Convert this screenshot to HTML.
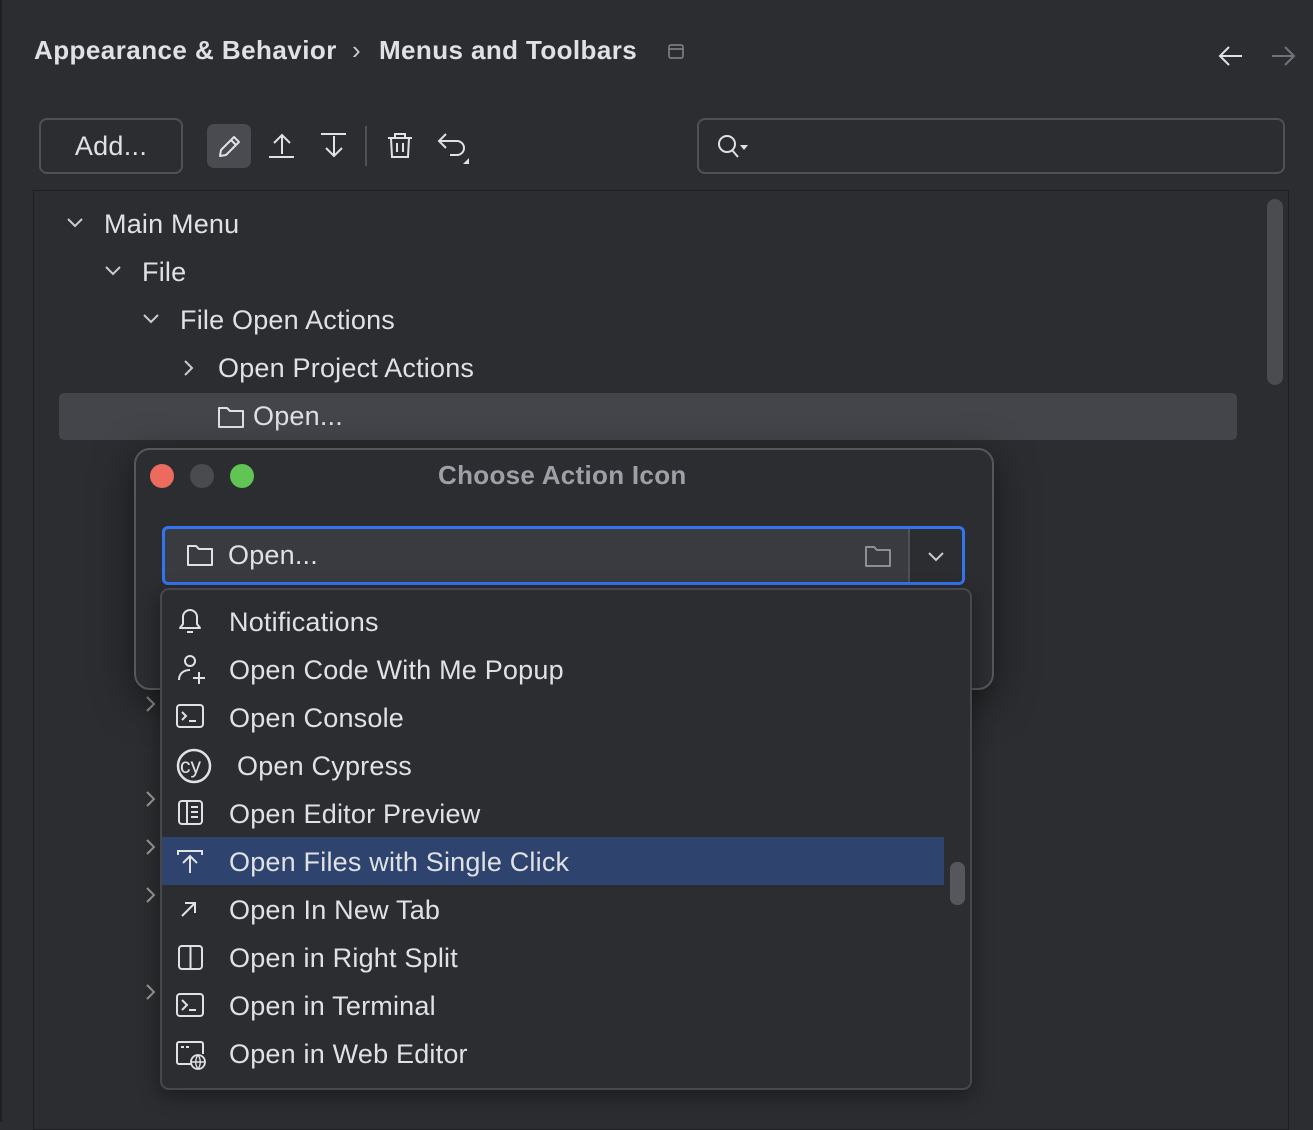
<!DOCTYPE html>
<html><head><meta charset="utf-8"><style>
*{box-sizing:border-box;margin:0;padding:0}
body{width:1313px;height:1122px;background:#2b2d30;font-family:"Liberation Sans",sans-serif;color:#dfe1e5;position:relative;overflow:hidden}
.abs{position:absolute}
.t{font-size:27px;white-space:nowrap;letter-spacing:0.2px}
svg{position:absolute;overflow:visible}
</style></head><body>
<div class="abs" style="left:0;top:0;width:2px;height:1122px;background:#1e1f22"></div>
<div class="abs t" style="left:34px;top:35px;font-weight:bold;font-size:26px;letter-spacing:0.45px">Appearance &amp; Behavior</div>
<div class="abs t" style="left:352px;top:35px;color:#ccc;font-size:26px">›</div>
<div class="abs t" style="left:379px;top:35px;font-weight:bold;font-size:26px;letter-spacing:0.4px">Menus and Toolbars</div>
<svg style="left:668px;top:44px" width="16" height="16"><rect x="1" y="1" width="14" height="13" rx="2" fill="none" stroke="#888" stroke-width="1.5"/><line x1="1" y1="5" x2="15" y2="5" stroke="#888" stroke-width="1.5"/></svg>
<svg style="left:1218px;top:44px" width="26" height="24"><path d="M24 12H2M11 3L2 12l9 9" fill="none" stroke="#dfe1e5" stroke-width="2"/></svg>
<svg style="left:1270px;top:44px" width="26" height="24"><path d="M2 12h22M15 3l9 9-9 9" fill="none" stroke="#6f737a" stroke-width="2"/></svg>

<div class="abs" style="left:39px;top:118px;width:144px;height:56px;border:2px solid #4e5157;border-radius:8px;font-size:27px;letter-spacing:0.3px;text-align:center;line-height:52px">Add...</div>
<div class="abs" style="left:207px;top:124px;width:44px;height:44px;background:#494b50;border-radius:7px"></div>
<svg style="left:215px;top:132px" width="28" height="28"><path d="M5 24l1-6L19 5l5 5L11 23z M16 8l5 5" fill="none" stroke="#dfe1e5" stroke-width="2" stroke-linejoin="round"/></svg>
<svg style="left:268px;top:132px" width="28" height="28"><path d="M14 22V3M6 11l8-8 8 8M1 25h25" fill="none" stroke="#dfe1e5" stroke-width="2"/></svg>
<svg style="left:320px;top:132px" width="28" height="28"><path d="M14 4v20M6 16l8 8 8-8M1 2h25" fill="none" stroke="#dfe1e5" stroke-width="2"/></svg>
<div class="abs" style="left:365px;top:126px;width:2px;height:40px;background:#4e5157"></div>
<svg style="left:386px;top:132px" width="28" height="30"><path d="M2 6h24M9 6V2h10v4M5 6l1 19h16l1-19M11 11v9M17 11v9" fill="none" stroke="#dfe1e5" stroke-width="2"/></svg>
<svg style="left:437px;top:132px" width="34" height="30"><path d="M9 2L2 9l7 7M2 9h18a7 7 0 010 14h-7" fill="none" stroke="#dfe1e5" stroke-width="2"/><path d="M32 26v6h-6z" fill="#dfe1e5"/></svg>

<div class="abs" style="left:697px;top:118px;width:588px;height:56px;border:2px solid #4e5157;border-radius:8px"></div>
<svg style="left:716px;top:133px" width="36" height="28"><circle cx="11" cy="11" r="8" fill="none" stroke="#dfe1e5" stroke-width="2"/><path d="M16 17l6 7" stroke="#dfe1e5" stroke-width="2"/><path d="M24 12h8l-4 5z" fill="#dfe1e5"/></svg>

<div class="abs" style="left:33px;top:190px;width:1256px;height:940px;border:1px solid #1e1f22;background:#2b2d30"></div>
<div class="abs" style="left:1267px;top:199px;width:16px;height:186px;background:#4a4c50;border-radius:8px"></div>

<svg style="left:66px;top:217px" width="18" height="12"><path d="M2 2l7 7 7-7" fill="none" stroke="#ccc" stroke-width="2"/></svg>
<div class="abs t" style="left:104px;top:209px">Main Menu</div>
<svg style="left:104px;top:265px" width="18" height="12"><path d="M2 2l7 7 7-7" fill="none" stroke="#ccc" stroke-width="2"/></svg>
<div class="abs t" style="left:142px;top:257px">File</div>
<svg style="left:142px;top:313px" width="18" height="12"><path d="M2 2l7 7 7-7" fill="none" stroke="#ccc" stroke-width="2"/></svg>
<div class="abs t" style="left:180px;top:305px">File Open Actions</div>
<svg style="left:183px;top:359px" width="12" height="18"><path d="M2 2l7 7-7 7" fill="none" stroke="#ccc" stroke-width="2"/></svg>
<div class="abs t" style="left:218px;top:353px">Open Project Actions</div>
<div class="abs" style="left:59px;top:393px;width:1178px;height:47px;background:#43454a;border-radius:5px"></div>
<svg style="left:217px;top:405px" width="28" height="24"><path d="M2 3h8l3 3h13v16H2z" fill="none" stroke="#dfe1e5" stroke-width="2" stroke-linejoin="round"/></svg>
<div class="abs t" style="left:253px;top:401px">Open...</div>

<svg style="left:145px;top:695px" width="12" height="18"><path d="M2 2l7 7-7 7" fill="none" stroke="#999" stroke-width="2"/></svg>
<svg style="left:145px;top:790px" width="12" height="18"><path d="M2 2l7 7-7 7" fill="none" stroke="#999" stroke-width="2"/></svg>
<svg style="left:145px;top:838px" width="12" height="18"><path d="M2 2l7 7-7 7" fill="none" stroke="#999" stroke-width="2"/></svg>
<svg style="left:145px;top:886px" width="12" height="18"><path d="M2 2l7 7-7 7" fill="none" stroke="#999" stroke-width="2"/></svg>
<svg style="left:145px;top:983px" width="12" height="18"><path d="M2 2l7 7-7 7" fill="none" stroke="#999" stroke-width="2"/></svg>

<div class="abs" style="left:134px;top:448px;width:860px;height:242px;background:#2b2d30;border:2px solid #55575c;border-radius:16px;box-shadow:0 10px 40px rgba(0,0,0,.5)"></div>
<div class="abs" style="left:150px;top:464px;width:24px;height:24px;border-radius:50%;background:#ec6a5e"></div>
<div class="abs" style="left:190px;top:464px;width:24px;height:24px;border-radius:50%;background:#4a4b4e"></div>
<div class="abs" style="left:230px;top:464px;width:24px;height:24px;border-radius:50%;background:#61c554"></div>
<div class="abs t" style="left:438px;top:460px;font-weight:bold;color:#9da0a6;font-size:26px;letter-spacing:0.3px">Choose Action Icon</div>
<div class="abs" style="left:162px;top:526px;width:803px;height:59px;border:3px solid #3574f0;border-radius:6px;background:#393b40;overflow:hidden">
<div class="abs" style="left:743px;top:0;width:60px;height:56px;background:#2b2d30;border-left:2px solid #4e5157"></div>
</div>
<svg style="left:186px;top:543px" width="28" height="24"><path d="M2 3h8l3 3h13v16H2z" fill="none" stroke="#dfe1e5" stroke-width="2" stroke-linejoin="round"/></svg>
<div class="abs t" style="left:228px;top:540px">Open...</div>
<svg style="left:864px;top:544px" width="28" height="24"><path d="M2 3h8l3 3h13v16H2z" fill="none" stroke="#8c8f94" stroke-width="2" stroke-linejoin="round"/></svg>
<svg style="left:927px;top:551px" width="18" height="12"><path d="M2 2l7 7 7-7" fill="none" stroke="#ccc" stroke-width="2"/></svg>

<div class="abs" style="left:160px;top:588px;width:812px;height:502px;background:#2b2d30;border:2px solid #46484d;border-radius:9px;box-shadow:0 6px 20px rgba(0,0,0,.4)"></div>
<div class="abs" style="left:162px;top:837px;width:782px;height:48px;background:#2e436e"></div>
<div class="abs" style="left:950px;top:862px;width:15px;height:43px;background:#55575c;border-radius:7px"></div>

<svg style="left:176px;top:606px" width="28" height="32"><path d="M4 22h20l-3-4V11a7 7 0 00-14 0v7z M11 26h6" fill="none" stroke="#dfe1e5" stroke-width="2" stroke-linejoin="round"/></svg>
<div class="abs t" style="left:229px;top:607px">Notifications</div>
<svg style="left:176px;top:654px" width="32" height="32"><circle cx="14" cy="7" r="5" fill="none" stroke="#dfe1e5" stroke-width="2"/><path d="M3 26c0-6 4-10 11-10 M17 24h12M23 18v12" fill="none" stroke="#dfe1e5" stroke-width="2"/></svg>
<div class="abs t" style="left:229px;top:655px">Open Code With Me Popup</div>
<svg style="left:176px;top:704px" width="30" height="26"><rect x="1" y="1" width="26" height="22" rx="3" fill="none" stroke="#dfe1e5" stroke-width="2"/><path d="M6 8l4 4-4 4M13 17h7" fill="none" stroke="#dfe1e5" stroke-width="2"/></svg>
<div class="abs t" style="left:229px;top:703px">Open Console</div>
<svg style="left:176px;top:748px" width="36" height="36"><circle cx="18" cy="18" r="16" fill="none" stroke="#dfe1e5" stroke-width="2.5"/><text x="4" y="25" font-family="Liberation Sans" font-size="21" fill="#dfe1e5">cy</text></svg>
<div class="abs t" style="left:237px;top:751px">Open Cypress</div>
<svg style="left:178px;top:800px" width="26" height="26"><rect x="1" y="1" width="23" height="23" rx="3" fill="none" stroke="#dfe1e5" stroke-width="2"/><path d="M9 1v23M13 7h7M13 12h7M13 17h7" fill="none" stroke="#dfe1e5" stroke-width="2"/></svg>
<div class="abs t" style="left:229px;top:799px">Open Editor Preview</div>
<svg style="left:177px;top:849px" width="28" height="26"><path d="M1 6V2h24v4M13 24V7M6 14l7-7 7 7" fill="none" stroke="#dfe1e5" stroke-width="2"/></svg>
<div class="abs t" style="left:229px;top:847px">Open Files with Single Click</div>
<svg style="left:180px;top:900px" width="18" height="18"><path d="M2 16L15 3M5 3h10v10" fill="none" stroke="#dfe1e5" stroke-width="2"/></svg>
<div class="abs t" style="left:229px;top:895px">Open In New Tab</div>
<svg style="left:178px;top:945px" width="26" height="26"><rect x="1" y="1" width="23" height="23" rx="3" fill="none" stroke="#dfe1e5" stroke-width="2"/><path d="M12.5 1v23" stroke="#dfe1e5" stroke-width="2"/></svg>
<div class="abs t" style="left:229px;top:943px">Open in Right Split</div>
<svg style="left:176px;top:993px" width="30" height="26"><rect x="1" y="1" width="26" height="22" rx="3" fill="none" stroke="#dfe1e5" stroke-width="2"/><path d="M6 7l5 5-5 5M13 17h7" fill="none" stroke="#dfe1e5" stroke-width="2"/></svg>
<div class="abs t" style="left:229px;top:991px">Open in Terminal</div>
<svg style="left:176px;top:1041px" width="32" height="30"><path d="M15 23H3a2 2 0 01-2-2V3a2 2 0 012-2h22a2 2 0 012 2v10M5 6h3M10 6h3" fill="none" stroke="#dfe1e5" stroke-width="2"/><circle cx="22" cy="21" r="7" fill="none" stroke="#dfe1e5" stroke-width="1.8"/><path d="M15 21h14M22 14c-3 4-3 10 0 14M22 14c3 4 3 10 0 14" fill="none" stroke="#dfe1e5" stroke-width="1.4"/></svg>
<div class="abs t" style="left:229px;top:1039px">Open in Web Editor</div>
</body></html>
